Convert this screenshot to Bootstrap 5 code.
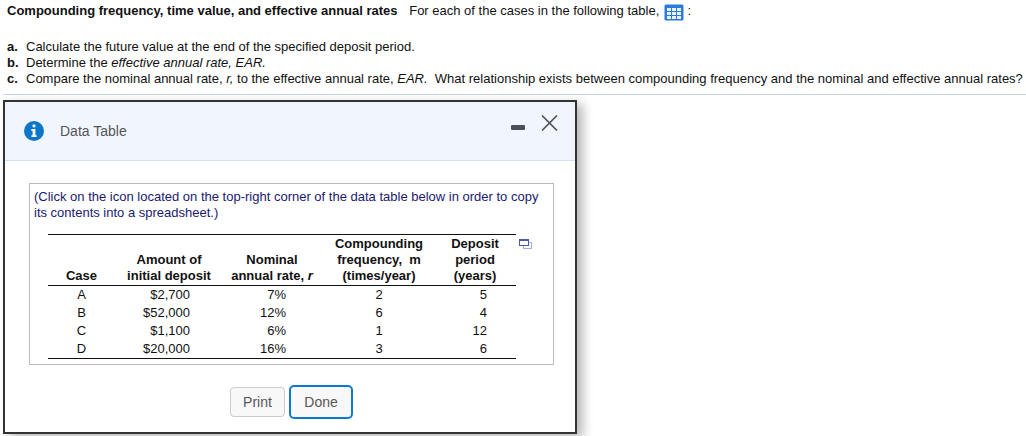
<!DOCTYPE html>
<html lang="en">
<head>
<meta charset="utf-8">
<title>Data Table</title>
<link rel="stylesheet" href="https://cdn.jsdelivr.net/npm/bootstrap@5.3.0/dist/css/bootstrap.min.css">
<style>
html,body{height:436px;overflow:hidden;background:#fff}
body{font-family:"Liberation Sans",Arial,sans-serif;font-size:13px;line-height:16px;color:#111}
.q-wrap{padding:3px 0 0 7px;height:94px;white-space:nowrap}
.q-intro{height:36px}
.q-intro b{margin-right:8px}
.q-item{display:flex}
.q-item b{width:19px;flex:none}
.grid-ic{display:inline-block;vertical-align:-6px;margin:0 0 0 1px}
.q-rule{height:1px;background:#c9d1de;margin-left:3px}
.dlg{width:574px;height:334px;margin:5px 0 0 3px;border:2px solid #333;background:#fff;box-shadow:6px 4px 10px rgba(0,0,0,.28)}
.dlg-head{height:59px;background:#f1f6fe;border-bottom:1px solid #cfe3f7;padding:0 17px 0 19px;color:#555;font-size:14px}
.dlg-title{margin-left:16px}
.ctl-ic{margin-bottom:16px}
.dlg-body{padding:22px 21px 0 24px}
.inner{border:1px solid #bbb;height:182px;padding:5px 5px 0 4px;color:#1a1a6e}
.inner-note{line-height:16px;height:34px}
.tbl-row{margin:11px 0 0 14px;align-items:flex-start}
.dt{width:468px;table-layout:fixed;border-collapse:collapse;color:#111;line-height:16px}
.dt th{font-weight:bold;vertical-align:bottom;text-align:center;padding:0}
.dt thead tr{border-top:1px solid #111;border-bottom:1px solid #111}
.dt thead th{padding:1px 0 1px}
.dt thead th.c5{padding-right:3px}
.dt tbody tr:last-child{border-bottom:1px solid #111}
.dt td{padding:0;height:18px;text-align:center;line-height:18px}
.c1{width:67px}.c2{width:108px}.c3{width:98px}.c4{width:116px}.c5{width:79px}
.dt td.num2{text-align:right;padding-right:33px}
.dt td.num3{text-align:right;padding-right:35px}
.dt td.num5{text-align:right;padding-right:29px}
.copy-ic{margin:5px 0 0 3px;flex:none}
.foot{padding-top:20px;gap:4px}
.btn-a,.btn-b{font-size:14px;color:#555;background:#f8f8f8;padding:0;line-height:1;display:flex;align-items:center;justify-content:center;border-radius:4px}
.btn-a{width:55px;height:30px;border:1px solid #ccc}
.btn-b{width:64px;height:34px;border:2.5px solid #0d7ad0;border-radius:5px}
.btn-a:hover,.btn-b:hover{color:#555;background:#f8f8f8}
</style>
</head>
<body>
<div class="q-wrap">
  <div class="q-intro"><b>Compounding frequency, time value, and effective annual rates</b> <span>For each of the cases in the following table,</span>
    <svg class="grid-ic" width="20" height="17" viewBox="0 0 20 17" aria-hidden="true"><rect width="19" height="16" x="0.5" y="0.5" rx="1.5" fill="#2b7bdc"/><g fill="#e8f1fd"><rect x="3" y="4" width="4" height="3"/><rect x="8" y="4" width="4" height="3"/><rect x="13" y="4" width="4" height="3"/><rect x="3" y="8" width="4" height="3"/><rect x="8" y="8" width="4" height="3"/><rect x="13" y="8" width="4" height="3"/><rect x="3" y="12" width="4" height="3"/><rect x="8" y="12" width="4" height="3"/><rect x="13" y="12" width="4" height="3"/></g></svg> <span>:</span></div>
  <div class="q-item"><b>a.</b><span>Calculate the future value at the end of the specified deposit period.</span></div>
  <div class="q-item"><b>b.</b><span>Determine the <i>effective annual rate, EAR.</i></span></div>
  <div class="q-item"><b>c.</b><span>Compare the nominal annual rate, <i>r,</i> to the effective annual rate, <i>EAR.</i>&nbsp; What relationship exists between compounding frequency and the nominal and effective annual rates?</span></div>
</div>
<div class="q-rule"></div>
<div class="dlg">
  <div class="dlg-head d-flex align-items-center">
    <svg width="20" height="20" viewBox="0 0 20 20" aria-hidden="true"><circle cx="10" cy="10" r="10" fill="#0b75c9"/><path d="M8.6 3.6h2.8v2.6H8.6zM7.4 8h4v6.2h1.2v1.9H7.4v-1.9h1.2V9.9H7.4z" fill="#fff"/></svg>
    <span class="dlg-title">Data Table</span>
    <span class="ms-auto d-flex align-items-center gap-3 ctl-ic">
      <svg width="14" height="5" viewBox="0 0 14 5" class="mt-2" aria-hidden="true"><rect width="14" height="5" y="0" rx="1" fill="#4b4f57"/></svg>
      <svg width="17" height="16" viewBox="0 0 17 16" aria-hidden="true"><path d="M1 .5l15 15M16 .5l-15 15" stroke="#555" stroke-width="1.7" fill="none"/></svg>
    </span>
  </div>
  <div class="dlg-body">
    <div class="inner">
      <div class="inner-note">(Click on the icon located on the top-right corner of the data table below in order to copy<br>its contents into a spreadsheet.)</div>
      <div class="d-flex tbl-row">
        <table class="dt">
          <thead><tr>
            <th class="c1">Case</th>
            <th class="c2">Amount of<br>initial deposit</th>
            <th class="c3">Nominal<br>annual rate, <i>r</i></th>
            <th class="c4">Compounding<br>frequency,&nbsp; m<br>(times/year)</th>
            <th class="c5">Deposit<br>period<br>(years)</th>
          </tr></thead>
          <tbody>
            <tr><td>A</td><td class="num2">$2,700</td><td class="num3">7%</td><td>2</td><td class="num5">5</td></tr>
            <tr><td>B</td><td class="num2">$52,000</td><td class="num3">12%</td><td>6</td><td class="num5">4</td></tr>
            <tr><td>C</td><td class="num2">$1,100</td><td class="num3">6%</td><td>1</td><td class="num5">12</td></tr>
            <tr><td>D</td><td class="num2">$20,000</td><td class="num3">16%</td><td>3</td><td class="num5">6</td></tr>
          </tbody>
        </table>
        <svg class="copy-ic" width="13" height="10" viewBox="0 0 13 10" aria-hidden="true"><rect x="4.5" y="3.5" width="8" height="6" fill="#fff" stroke="#a6aed6"/><rect x="0.5" y="0.5" width="9" height="6" fill="#fff" stroke="#4a5aa8"/><rect x="0" y="0" width="10" height="2" fill="#4a5aa8"/></svg>
      </div>
    </div>
    <div class="d-flex justify-content-center align-items-center foot">
      <button type="button" class="btn btn-a">Print</button>
      <button type="button" class="btn btn-b">Done</button>
    </div>
  </div>
</div>
<script src="https://cdn.jsdelivr.net/npm/bootstrap@5.3.0/dist/js/bootstrap.bundle.min.js"></script>
</body>
</html>
